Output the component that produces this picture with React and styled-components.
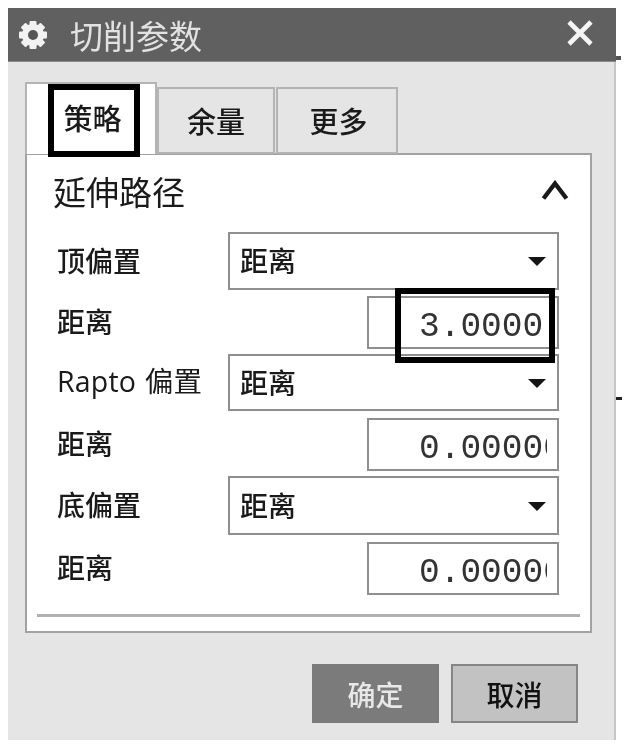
import React from "react";
import styled, { createGlobalStyle } from "styled-components";

const Global = createGlobalStyle`
  html, body { margin: 0; padding: 0; background: #fff; }
  #root { width: 633px; height: 747px; overflow: hidden; }
`;
const cjk = `"Noto Sans CJK SC", "Liberation Sans", sans-serif`;

const Page = styled.div`
  position: relative;
  width: 633px;
  height: 747px;
  padding: 8px 0 0 8px;
  box-sizing: border-box;
  filter: blur(0.55px);
  font-family: ${cjk};
  color: #1a1a1a;
`;
const Dialog = styled.div`
  width: 608px;
  height: 732px;
  background: #e5e5e5;
  border-right: 2px solid #c6c6c6;
  box-sizing: border-box;
  display: flex;
  flex-direction: column;
`;
const TitleBar = styled.div`
  height: 54px;
  flex: none;
  margin-right: -2px;
  background: #606060;
  border-bottom: 1px solid #8a8a8a;
  box-sizing: border-box;
  display: flex;
  align-items: center;
  padding: 0 23px 0 10px;
  color: #e2e2e2;
  font-size: 33px;
  gap: 22px;
`;
const TitleText = styled.span`
  flex: 1;
  font-weight: 400;
  line-height: 1;
  padding-top: 2px;
`;
const CloseIcon = styled.svg`
  margin-bottom: 4px;
`;
const Content = styled.div`
  flex: 1;
  display: flex;
  flex-direction: column;
  padding: 20px 22px 0 17px;
`;
const TabBar = styled.div`
  height: 72px;
  flex: none;
  display: flex;
  align-items: flex-end;
  margin-bottom: -1px;
  position: relative;
  z-index: 1;
`;
const ActiveTab = styled.div`
  box-sizing: border-box;
  width: 132px;
  height: 72px;
  background: #fff;
  border: 2px solid #b4b4b4;
  border-bottom: none;
  padding-left: 21px;
`;
const Tab = styled.div`
  box-sizing: border-box;
  width: ${p => p.$w}px;
  height: 67px;
  margin-right: ${p => p.$gap || 0}px;
  padding-left: ${p => p.$shift || 0}px;
  background: #e5e5e5;
  border: 2px solid #b4b4b4;
  display: flex;
  align-items: center;
  justify-content: center;
  font-size: 29px;
  font-weight: 500;
  line-height: 1;
`;
const Highlight = styled.div`
  box-sizing: border-box;
  width: 92px;
  height: 73px;
  border: 6px solid #000;
  display: flex;
  align-items: center;
  justify-content: center;
  padding: 0 3px 7px 0;
  font-size: 29px;
  font-weight: 500;
  line-height: 1;
`;
const Panel = styled.div`
  box-sizing: border-box;
  width: 567px;
  height: 480px;
  background: #fff;
  border: 2px solid #a2a2a2;
  padding: 0 10px;
  display: flex;
  flex-direction: column;
`;
const GroupHead = styled.div`
  height: 77px;
  flex: none;
  display: flex;
  align-items: center;
  justify-content: space-between;
  padding: 0 11px 4px 16px;
  box-sizing: border-box;
  font-size: 33px;
  font-weight: 400;
  line-height: 1;
`;
const ChevronIcon = styled.svg`
  margin-bottom: 4px;
`;
const Rows = styled.div`
  display: flex;
  flex-direction: column;
  padding: 0 21px 0 20px;
`;
const Row = styled.div`
  display: flex;
  align-items: center;
  justify-content: space-between;
  height: ${p => p.$h}px;
  margin-bottom: ${p => p.$mb}px;
`;
const Label = styled.span`
  font-size: 28px;
  font-weight: 500;
  line-height: 1;
  white-space: nowrap;
  margin-bottom: 3px;
`;
const LatinLabel = styled(Label)`
  font-family: "Open Sans", ${cjk};
  font-weight: 400;
  word-spacing: 1px;
  font-size: 28.5px;
  letter-spacing: 0.2px;
`;
const SelectBox = styled.div`
  box-sizing: border-box;
  width: 331px;
  height: 100%;
  background: #fff;
  border: 2px solid #8f8f8f;
  display: flex;
  align-items: center;
  justify-content: space-between;
  padding: 0 11px 2px 10px;
  font-size: 28px;
  font-weight: 500;
  line-height: 1;
`;
const Caret = styled.span`
  width: 0;
  height: 0;
  margin-top: 3px;
  border-left: 9px solid transparent;
  border-right: 9px solid transparent;
  border-top: 9px solid #151515;
`;
const NumberBox = styled.div`
  box-sizing: border-box;
  width: 192px;
  height: 100%;
  background: #fff;
  border: 2px solid #8f8f8f;
  display: flex;
  align-items: center;
  padding: 10px 0 0 50px;
`;
const NumberText = styled.span`
  display: block;
  width: 128px;
  overflow: hidden;
  white-space: nowrap;
  font-family: "Liberation Mono", monospace;
  font-size: 34.5px;
  line-height: 1;
  color: #333;
`;
const Divider = styled.div`
  height: 3px;
  margin-top: 19px;
  background: #b0b0b0;
`;
const Footer = styled.div`
  display: flex;
  justify-content: flex-end;
  gap: 12px;
  padding: 31px 14px 0 0;
`;
const Button = styled.div`
  box-sizing: border-box;
  width: 127px;
  height: 59px;
  background: ${p => (p.$primary ? "#7b7b7b" : "#c2c2c2")};
  color: ${p => (p.$primary ? "#e8e8e8" : "#111")};
  border: 2px solid ${p => (p.$primary ? "#7b7b7b" : "#858585")};
  display: flex;
  align-items: center;
  justify-content: center;
  font-size: 28px;
  font-weight: 500;
  line-height: 1;
`;
const Callout = styled.div`
  position: absolute;
  left: 395px;
  top: 288px;
  width: 160px;
  height: 75px;
  box-sizing: border-box;
  border: 6px solid #000;
`;
const Tick = styled.div`
  position: absolute;
  left: 616px;
  top: ${p => p.$top}px;
  width: ${p => p.$w}px;
  height: ${p => p.$h}px;
  background: ${p => p.$c};
`;

const Gear = () => (
  <svg width="30" height="30" viewBox="0 0 30 30">
    <g fill="#f2f2f2">
      {[0, 45, 90, 135].map(a => (
        <rect key={a} x="11.5" y="1" width="7" height="28" rx="1" transform={`rotate(${a} 15 15)`} />
      ))}
      <circle cx="15" cy="15" r="11" />
    </g>
    <circle cx="15" cy="15" r="5" fill="#555" />
  </svg>
);
const Close = () => (
  <CloseIcon width="26" height="26" viewBox="0 0 26 26">
    <path d="M2 2 L24 24 M24 2 L2 24" stroke="#f5f5f5" strokeWidth="4.6" fill="none" />
  </CloseIcon>
);
const Chevron = () => (
  <ChevronIcon width="28" height="20" viewBox="0 0 28 20">
    <path d="M2.5 18.5 L14 3.5 L25.5 18.5" stroke="#1a1a1a" strokeWidth="4.4" fill="none" />
  </ChevronIcon>
);

const rows = [
  { h: 58, mb: 6, label: "顶偏置", kind: "select" },
  { h: 53, mb: 5, label: "距离", kind: "num", value: "3.0000" },
  { h: 57, mb: 7, label: "Rapto 偏置", kind: "select", latin: true },
  { h: 53, mb: 5, label: "距离", kind: "num", value: "0.00000" },
  { h: 59, mb: 7, label: "底偏置", kind: "select" },
  { h: 53, mb: 0, label: "距离", kind: "num", value: "0.00000" },
];

export default function App() {
  return (
    <Page>
      <Global />
      <Dialog>
        <TitleBar>
          <Gear />
          <TitleText>切削参数</TitleText>
          <Close />
        </TitleBar>
        <Content>
          <TabBar>
            <ActiveTab>
              <Highlight>策略</Highlight>
            </ActiveTab>
            <Tab $w={118} $gap={1}>余量</Tab>
            <Tab $w={122} $shift={3}>更多</Tab>
          </TabBar>
          <Panel>
            <GroupHead>
              延伸路径
              <Chevron />
            </GroupHead>
            <Rows>
              {rows.map((r, i) => {
                const L = r.latin ? LatinLabel : Label;
                return (
                  <Row key={i} $h={r.h} $mb={r.mb}>
                    <L>{r.label}</L>
                    {r.kind === "select" ? (
                      <SelectBox>
                        距离
                        <Caret />
                      </SelectBox>
                    ) : (
                      <NumberBox>
                        <NumberText>{r.value}</NumberText>
                      </NumberBox>
                    )}
                  </Row>
                );
              })}
            </Rows>
            <Divider />
          </Panel>
          <Footer>
            <Button $primary>确定</Button>
            <Button>取消</Button>
          </Footer>
        </Content>
      </Dialog>
      <Callout />
      <Tick $top={56} $w={5} $h={4} $c="#555" />
      <Tick $top={397} $w={6} $h={3} $c="#222" />
    </Page>
  );
}
